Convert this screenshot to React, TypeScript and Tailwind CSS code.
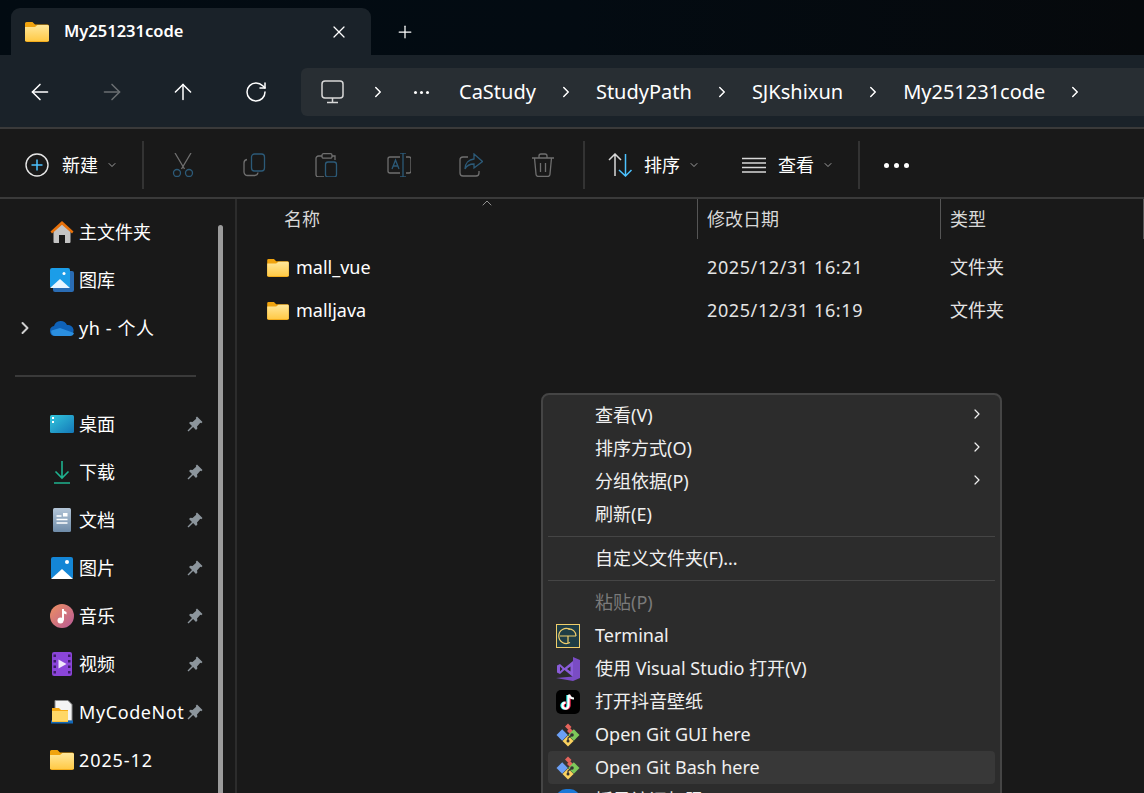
import { ArrowLeft, ArrowRight, ArrowUp, ChevronDown, ChevronRight, ChevronUp, Plus, RotateCw, X } from "lucide-react";
import type { ReactNode } from "react";

function FolderIcon({ className = "w-[24px] h-[20px]", id = "fold" }: { className?: string; id?: string }) {
  return (
    <svg className={className} viewBox="0 0 24 20">
      <defs>
        <linearGradient id={id} x1="0" y1="0" x2="0" y2="1">
          <stop offset="0" stopColor="#ffe79a" />
          <stop offset="1" stopColor="#ffc945" />
        </linearGradient>
      </defs>
      <path d="M0 1.500A1.500 1.500 0 0 1 1.500 0h6l2.500 2.500h12.500A1.500 1.500 0 0 1 24 4v14a2 2 0 0 1-2 2H2a2 2 0 0 1-2-2z" fill="#f0a30e" />
      <path d="M0 5h10l2.500-2h10A1.500 1.500 0 0 1 24 4.500V18.500a.8.8 0 0 1-.8.8H.8a.8.8 0 0 1-.8-.8z" fill={`url(#${id})`} />
    </svg>
  );
}

const HomeIcon = () => (
  <svg className="w-6 h-6" viewBox="0 0 24 24">
    <path d="M3.500 11 12 4l8.500 7v11a1 1 0 0 1-1 1H15v-8H9v8H4.500a1 1 0 0 1-1-1z" fill="#c4c4c4" />
    <path d="M0.500 11.500 12 1l11.500 10.500-1.500 2L12 4.800 2 13.500z" fill="#e8710a" />
  </svg>
);

const GalleryIcon = () => (
  <svg className="w-6 h-6" viewBox="0 0 24 24">
    <rect x="3" y="3" width="21" height="21" rx="2" fill="#2a6cb4" />
    <rect x="0" y="0" width="20" height="20" rx="2" fill="#1b9de8" />
    <path d="M0 20l10-9 10 9z" fill="#e8f5ff" />
    <circle cx="14" cy="5.500" r="1.500" fill="#fff" />
  </svg>
);

const CloudIcon = () => (
  <svg className="w-6 h-6" viewBox="0 0 24 24">
    <path d="M5 20a5 5 0 0 1-1-9.900A7 7 0 0 1 17 9a5.500 5.500 0 0 1 2 11z" fill="#0f62b8" />
    <path d="M5 20a4 4 0 0 1-3.500-5.500L10 12l14 5a4 4 0 0 1-4 3z" fill="#2b8fe0" />
  </svg>
);

const DesktopIcon = () => (
  <svg className="w-6 h-[19px]" viewBox="0 0 24 19">
    <defs>
      <linearGradient id="desk" x1="0" y1="0" x2="1" y2="1">
        <stop offset="0" stopColor="#33c6dc" />
        <stop offset="1" stopColor="#1478b8" />
      </linearGradient>
    </defs>
    <rect width="24" height="18" rx="1.500" fill="url(#desk)" />
    <rect x="2" y="2" width="2" height="2" fill="#fff" />
    <rect x="2" y="6" width="2" height="2" fill="#fff" />
  </svg>
);

const DownloadIcon = () => (
  <svg className="w-6 h-6" viewBox="0 0 24 24" fill="none" stroke="#1fb28f" strokeWidth="1.600">
    <path d="M12 1v17M5.500 11.500 12 18l6.500-6.500M4 23h16" />
  </svg>
);

const DocIcon = () => (
  <svg className="w-6 h-6" viewBox="0 0 24 24">
    <defs>
      <linearGradient id="doc" x1="0" y1="0" x2="0" y2="1">
        <stop offset="0" stopColor="#b4c6d8" />
        <stop offset="1" stopColor="#6e8ba8" />
      </linearGradient>
    </defs>
    <rect x="3" y="0" width="18" height="24" rx="1.500" fill="url(#doc)" />
    <path d="M6.500 8h5M6.500 11.500h11M6.500 15h11" stroke="#fff" strokeWidth="1.300" />
    <rect x="13" y="5" width="4.500" height="3.500" fill="#fff" />
  </svg>
);

const PictureIcon = () => (
  <svg className="w-6 h-6" viewBox="0 0 24 24">
    <rect x="1" y="1" width="22" height="22" rx="2" fill="#1486d6" />
    <path d="M1 23l11-10 11 10z" fill="#fff" />
    <circle cx="17" cy="6" r="2" fill="#fff" />
  </svg>
);

const MusicIcon = () => (
  <svg className="w-6 h-6" viewBox="0 0 24 24">
    <defs>
      <linearGradient id="mus" x1="0" y1="0" x2="1" y2="1">
        <stop offset="0" stopColor="#ee9060" />
        <stop offset="1" stopColor="#b75a98" />
      </linearGradient>
    </defs>
    <circle cx="12" cy="12" r="12" fill="url(#mus)" />
    <path d="M13 5v11.500" stroke="#fff" strokeWidth="2" />
    <path d="M12.500 5c1 2 3 2.500 4 3v2.500c-1.500-.5-3-1-4-2z" fill="#fff" />
    <circle cx="10.500" cy="16.500" r="3" fill="#fff" />
  </svg>
);

const VideoIcon = () => (
  <svg className="w-6 h-6" viewBox="0 0 24 24">
    <rect x="2" y="0" width="20" height="24" rx="2" fill="#8b45d9" />
    <rect x="3.500" y="2.500" width="2.500" height="2.500" fill="#3c1c68" />
    <rect x="3.500" y="8" width="2.500" height="2.500" fill="#3c1c68" />
    <rect x="3.500" y="13.500" width="2.500" height="2.500" fill="#3c1c68" />
    <rect x="3.500" y="19" width="2.500" height="2.500" fill="#3c1c68" />
    <rect x="18" y="2.500" width="2.500" height="2.500" fill="#3c1c68" />
    <rect x="18" y="8" width="2.500" height="2.500" fill="#3c1c68" />
    <rect x="18" y="13.500" width="2.500" height="2.500" fill="#3c1c68" />
    <rect x="18" y="19" width="2.500" height="2.500" fill="#3c1c68" />
    <path d="M8.500 7.500 16.500 12l-8 4.500z" fill="#efe6fb" />
  </svg>
);

const NoteFolderIcon = () => (
  <svg className="w-6 h-6" viewBox="0 0 24 24">
    <path d="M5 .5h13l4 4V21H5z" fill="#f4f4f4" stroke="#8a8a8a" />
    <rect x="1" y="20.500" width="22" height="3" fill="#1268b8" />
    <path d="M2 8h7l2 2h7v12H2z" fill="#f5a914" />
    <rect x="2" y="11" width="16" height="10.500" fill="#ffd767" />
  </svg>
);

const PinIcon = () => (
  <svg className="w-[16px] h-[16px]" viewBox="0 0 16 16" fill="#8c959c">
    <path d="M10 .5 15.500 6l-1.200 1.200-1-.4L10 10.500l.4 2.100-1.400 1.300-2.900-3L1.500 15.500 0.500 14.500 5 9.900l-3-2.900L3.400 5.700l2.100.4L9.200 2.700l-.4-1z" />
  </svg>
);

const GitIcon = () => (
  <svg className="w-6 h-6" viewBox="0 0 24 24">
    <path d="M9 3.500 12 .5 15.500 4l-3 3z" fill="#e5645c" />
    <path d="M13.500 8l3-3 3 3-3 3z" fill="#e5645c" transform="translate(-2.500 0)" />
    <path d="M6.200 6.300 11.800 12l-5.600 5.700L.5 12z" fill="#6ca0f5" />
    <path d="M17.800 6.300 23.500 12l-5.700 5.700L12.200 12z" fill="#7dc95a" />
    <path d="M12 12.400l5.600 5.600L12 23.500 6.500 18z" fill="#fbd25f" />
    <circle cx="16" cy="12" r="1.800" fill="#333" />
    <circle cx="12" cy="18" r="1.500" fill="#333" />
    <path d="M12 18v-3l4-3" stroke="#333" strokeWidth="1.200" fill="none" />
  </svg>
);

const TerminalIcon = () => (
  <svg className="w-6 h-6" viewBox="0 0 24 24" fill="none">
    <rect x=".5" y=".5" width="23" height="23" fill="#1f3d45" stroke="#f0cd6a" />
    <g stroke="#f0cd6a" strokeWidth="1.200">
      <path d="M14 5.500A7.500 7.500 0 1 0 14 18.500" />
      <path d="M12 12V19M4 12H20M12 5a7 7 0 0 1 8 7" />
    </g>
  </svg>
);

const VsIcon = () => (
  <svg className="w-6 h-6" viewBox="0 0 24 24">
    <path d="M17 0l7 3v18l-7 3-17-3 17-1.500z" fill="#7a4cc4" />
    <path d="M17 4v16L8.500 13 4 17l-3-1.500V8.500L4 7l4.500 4z" fill="#8a5cd8" />
    <path d="M4 9.500v5l2.500-2.500zM11 12l3.500 2.500v-5z" fill="#2c2c2c" />
  </svg>
);

const TikTokIcon = () => (
  <svg className="w-6 h-6" viewBox="0 0 24 24">
    <rect width="24" height="24" rx="5" fill="#000" />
    <path d="M12.500 4.500v10.500a3 3 0 1 1-3-3" fill="none" stroke="#25f4ee" strokeWidth="2.400" transform="translate(-1 .6)" />
    <path d="M12.500 4.500v10.500a3 3 0 1 1-3-3" fill="none" stroke="#fe2c55" strokeWidth="2.400" transform="translate(1 .6)" />
    <path d="M12.500 4.500v10.500a3 3 0 1 1-3-3" fill="none" stroke="#fff" strokeWidth="2.200" transform="translate(0 .6)" />
    <path d="M13 4.500c.5 2.500 2.500 4 5 4" fill="none" stroke="#fff" strokeWidth="2.200" />
  </svg>
);

const grey = "#6f6f6f";
const blue = "#2c5a78";

// disabled toolbar glyphs, drawn at the 24px windows icon grid
const CutIcon = () => (
  <svg className="w-6 h-6" viewBox="0 0 24 24" fill="none" strokeWidth="1.300">
    <path d="M4 0l9.500 16M20 0l-9.500 16" stroke={grey} />
    <circle cx="6" cy="20" r="3.500" stroke={blue} />
    <circle cx="18" cy="20" r="3.500" stroke={blue} />
  </svg>
);
const CopyIcon = () => (
  <svg className="w-6 h-6" viewBox="0 0 24 24" fill="none" strokeWidth="1.300">
    <path d="M4 6.500a3.500 3.500 0 0 0-3 3.500v9a3.500 3.500 0 0 0 3.500 3.500h7a3.500 3.500 0 0 0 3.500-3" stroke={grey} />
    <rect x="8.500" y="1" width="13" height="17" rx="3" stroke={blue} />
  </svg>
);
const PasteIcon = () => (
  <svg className="w-6 h-6" viewBox="0 0 24 24" fill="none" strokeWidth="1.300">
    <path d="M7 3H3.500A2.500 2.500 0 0 0 1 5.500v16A2.500 2.500 0 0 0 3.500 24H9M17 3h3v4" stroke={grey} />
    <rect x="7" y="0.700" width="10" height="4.500" rx="1.500" stroke={grey} />
    <rect x="10.500" y="9" width="11" height="15" rx="2.500" stroke={blue} />
  </svg>
);
const RenameIcon = () => (
  <svg className="w-6 h-6" viewBox="0 0 24 24" fill="none" strokeWidth="1.300">
    <path d="M13 4H3a2 2 0 0 0-2 2v12a2 2 0 0 0 2 2h10M19 4h3a2 2 0 0 1 2 2v12a2 2 0 0 1-2 2h-3" stroke={grey} />
    <path d="M13 0h6M16 0v24M13 24h6M5 16l3.500-9L12 16M6 13h5" stroke={blue} />
  </svg>
);
const ShareIcon = () => (
  <svg className="w-6 h-6" viewBox="0 0 24 24" fill="none" strokeWidth="1.300">
    <path d="M9 4H4a3 3 0 0 0-3 3v13a3 3 0 0 0 3 3h13a3 3 0 0 0 3-3v-2" stroke={grey} />
    <path d="M15 1l8.500 7.500L15 15v-4c-4 0-7 1-9 5 0-6 4-9.500 9-10z" stroke={blue} />
  </svg>
);
const TrashIcon = () => (
  <svg className="w-6 h-6" viewBox="0 0 24 24" fill="none" stroke={grey} strokeWidth="1.300">
    <path d="M1 5h22M8 5V3a2 2 0 0 1 2-2h4a2 2 0 0 1 2 2v2M3.500 5 5 21a2.500 2.500 0 0 0 2.500 2.500h9A2.500 2.500 0 0 0 19 21l1.500-16M9.500 10v9M14.500 10v9" />
  </svg>
);

function Crumb({ children }: { children: ReactNode }) {
  return (
    <>
      <span className="text-[20px] leading-none">{children}</span>
      <ChevronRight className="w-[18px] h-[18px] mx-[21px]" strokeWidth={2} />
    </>
  );
}

function SideItem({ icon, label, pin, chevron, tracking }: { icon: ReactNode; label: string; pin?: boolean; chevron?: boolean; tracking?: string }) {
  return (
    <div className="h-12 flex items-center pl-[50px] relative shrink-0">
      {chevron && <ChevronRight className="absolute left-[15px] w-5 h-5 text-[#d0d0d0]" strokeWidth={2.4} />}
      <span className="w-6 h-6 flex items-center justify-center shrink-0">{icon}</span>
      <span className={`ml-[5px] w-[108px] whitespace-nowrap ${tracking ?? ""}`}>{label}</span>
      {pin && <PinIcon />}
    </div>
  );
}

function MenuItem({ label, icon, arrow, dim, hot }: { label: string; icon?: ReactNode; arrow?: boolean; dim?: boolean; hot?: boolean }) {
  return (
    <div className={`h-[33px] flex items-center rounded-[4px] pl-[8px] pr-[10px] shrink-0 ${hot ? "bg-[#383838]" : ""} ${dim ? "text-[#7a7a7a]" : "text-[#f0f0f0]"}`}>
      <span className="w-6 h-6 shrink-0 mr-[15px]">{icon}</span>
      <span className="flex-1 whitespace-nowrap">{label}</span>
      {arrow && <ChevronRight className="w-4 h-4 text-[#f0f0f0] -mt-[3px]" strokeWidth={1.800} />}
    </div>
  );
}

const MenuRule = () => <div className="h-px bg-[#454545] my-[5px] shrink-0" />;

function ToolButton({ children, className = "" }: { children: ReactNode; className?: string }) {
  return <div className={`w-6 h-6 ${className}`}>{children}</div>;
}

export default function App() {
  return (
    <div className="relative w-[1144px] h-[793px] overflow-hidden bg-[#191919] text-white text-[18px] font-['Noto_Sans','Noto_Sans_CJK_SC',sans-serif] flex flex-col">
      {/* tab strip */}
      <div className="h-[55px] shrink-0 flex items-end bg-gradient-to-r from-[#020b12] via-[#030b12] to-[#06090c]">
        <div className="ml-[11px] w-[360px] h-[47px] bg-[#1a2229] rounded-t-[9px] flex items-center pl-[14px] pr-[22px]">
          <FolderIcon id="fold-tab" />
          <span className="ml-[15px] flex-1 font-semibold text-[16.500px]">My251231code</span>
          <X className="w-[20px] h-[20px]" strokeWidth={1.500} />
        </div>
        <div className="h-[47px] flex items-center ml-[24px]">
          <Plus className="w-[20px] h-[20px]" strokeWidth={1.500} />
        </div>
      </div>

      {/* nav + address */}
      <div className="h-[72px] shrink-0 pt-[2px] bg-[#1a2229] flex items-center">
        <div className="w-[301px] flex items-center shrink-0">
          <ArrowLeft className="ml-[27px] w-[26px] h-[26px]" strokeWidth={1.400} />
          <ArrowRight className="ml-[46px] w-[26px] h-[26px] text-[#6b6f72]" strokeWidth={1.400} />
          <ArrowUp className="ml-[45px] w-[26px] h-[26px]" strokeWidth={1.400} />
          <RotateCw className="ml-[48px] w-[24px] h-[24px]" strokeWidth={1.500} />
        </div>
        <div className="flex-1 h-[48px] bg-[#282e33] rounded-l-[6px] flex items-center pl-[20px] overflow-hidden">
          <svg className="w-6 h-6 shrink-0" viewBox="0 0 24 24" fill="none" stroke="#d8d8d8" strokeWidth="1.500">
            <rect x="1" y="1" width="21" height="17" rx="3" />
            <path d="M11.500 18v4M6 22.500h11" />
          </svg>
          <ChevronRight className="w-[18px] h-[18px] ml-[24px]" strokeWidth={2} />
          <span className="ml-[27px] flex gap-[3px]">
            <i className="w-[3px] h-[3px] bg-white rounded-full" />
            <i className="w-[3px] h-[3px] bg-white rounded-full" />
            <i className="w-[3px] h-[3px] bg-white rounded-full" />
          </span>
          <span className="ml-[30px] flex items-center">
            <Crumb>CaStudy</Crumb>
            <Crumb>StudyPath</Crumb>
            <Crumb>SJKshixun</Crumb>
            <Crumb>My251231code</Crumb>
          </span>
        </div>
      </div>

      {/* command bar */}
      <div className="h-[72px] shrink-0 pt-[4px] bg-[#191919] border-y-2 border-[#3a3a3a] flex items-center">
        <svg className="ml-[25px] w-6 h-6" viewBox="0 0 24 24" fill="none">
          <circle cx="12" cy="12" r="11" stroke="#e6e6e6" strokeWidth="1.400" />
          <path d="M12 6.500v11M6.500 12h11" stroke="#4cc2ff" strokeWidth="1.500" />
        </svg>
        <span className="ml-[13px]">新建</span>
        <ChevronDown className="ml-[8px] w-[12px] h-[12px] text-[#c8c8c8]" strokeWidth={1.500} />
        <div className="ml-[24px] w-[2px] h-[48px] bg-[#333]" />
        <ToolButton className="ml-[27px]"><CutIcon /></ToolButton>
        <ToolButton className="ml-[48px]"><CopyIcon /></ToolButton>
        <ToolButton className="ml-[48px]"><PasteIcon /></ToolButton>
        <ToolButton className="ml-[48px]"><RenameIcon /></ToolButton>
        <ToolButton className="ml-[48px]"><ShareIcon /></ToolButton>
        <ToolButton className="ml-[48px]"><TrashIcon /></ToolButton>
        <div className="ml-[28px] w-[2px] h-[48px] bg-[#333]" />
        <svg className="ml-[23px] w-6 h-6" viewBox="0 0 24 24" fill="none" strokeWidth="1.500">
          <path d="M1 7l6-6 6 6M7 1v22" stroke="#d8d8d8" />
          <path d="M11 17l6.500 6 6-6M17.500 1v22" stroke="#4cc2ff" />
        </svg>
        <span className="ml-[12px]">排序</span>
        <ChevronDown className="ml-[8px] w-[12px] h-[12px] text-[#c8c8c8]" strokeWidth={1.500} />
        <svg className="ml-[42px] w-6 h-6" viewBox="0 0 24 24" fill="none" stroke="#d8d8d8" strokeWidth="1.400">
          <path d="M0 5.500h24M0 10h24M0 14.500h24M0 19h24" />
        </svg>
        <span className="ml-[12px]">查看</span>
        <ChevronDown className="ml-[8px] w-[12px] h-[12px] text-[#c8c8c8]" strokeWidth={1.500} />
        <div className="ml-[24px] w-[2px] h-[48px] bg-[#333]" />
        <span className="ml-[24px] flex gap-[5px]">
          <i className="w-[5px] h-[5px] bg-white rounded-full" />
          <i className="w-[5px] h-[5px] bg-white rounded-full" />
          <i className="w-[5px] h-[5px] bg-white rounded-full" />
        </span>
      </div>

      {/* body */}
      <div className="flex-1 flex min-h-0">
        <aside className="w-[237px] shrink-0 border-r-2 border-[#2c2c2c] relative pt-[9px] overflow-hidden">
          <SideItem icon={<HomeIcon />} label="主文件夹" />
          <SideItem icon={<GalleryIcon />} label="图库" />
          <SideItem icon={<CloudIcon />} label="yh - 个人" chevron tracking="tracking-[0.6px]" />
          <div className="h-12 flex items-center pl-[15px] pr-[39px]"><div className="h-[2px] w-full bg-[#3a3a3a]" /></div>
          <SideItem icon={<DesktopIcon />} label="桌面" pin />
          <SideItem icon={<DownloadIcon />} label="下载" pin />
          <SideItem icon={<DocIcon />} label="文档" pin />
          <SideItem icon={<PictureIcon />} label="图片" pin />
          <SideItem icon={<MusicIcon />} label="音乐" pin />
          <SideItem icon={<VideoIcon />} label="视频" pin />
          <SideItem icon={<NoteFolderIcon />} label="MyCodeNot" pin tracking="tracking-[0.6px]" />
          <SideItem icon={<FolderIcon className="w-6 h-[20px]" id="fold-side" />} label="2025-12" tracking="tracking-[0.9px]" />
          <div className="absolute left-[218px] top-[26px] bottom-0 w-[5px] bg-[#9b9b9b] rounded-t-full" />
        </aside>

        <main className="flex-1 min-w-0">
          <div className="h-[40px] relative flex items-center text-[#d8d8d8]">
            <span className="w-[460px] pl-[47px]">名称</span>
            <span className="w-[243px] pl-[9px] h-full flex items-center border-l border-[#555]">修改日期</span>
            <span className="flex-1 pl-[9px] h-full flex items-center border-l border-r border-[#555]">类型</span>
            <ChevronUp className="absolute left-[242px] top-[-4px] w-4 h-4 text-[#b0b0b0]" strokeWidth={1.200} />
          </div>
          <div className="flex flex-col pt-[7px]">
            {[
              ["mall_vue", "2025/12/31 16:21"],
              ["malljava", "2025/12/31 16:19"],
            ].map(([name, date], i) => (
              <div key={name} className="h-[43px] flex items-center">
                <span className="w-[460px] pl-[30px] flex items-center whitespace-nowrap">
                  <FolderIcon className="w-[22px] h-[18px]" id={`fold-row-${i}`} />
                  <span className="ml-[7px]">{name}</span>
                </span>
                <span className="w-[243px] pl-[10px] text-[#e4e4e4] tracking-[0.6px]">{date}</span>
                <span className="pl-[10px] text-[#e4e4e4]">文件夹</span>
              </div>
            ))}
          </div>
        </main>
      </div>

      {/* context menu, runs past the bottom of the shot */}
      <div className="absolute left-[541px] top-[393px] w-[461px] h-[440px] bg-[#2c2c2c] border-2 border-[#454545] rounded-[8px] px-[5px] pt-[4px] flex flex-col">
        <MenuItem label="查看(V)" arrow />
        <MenuItem label="排序方式(O)" arrow />
        <MenuItem label="分组依据(P)" arrow />
        <MenuItem label="刷新(E)" />
        <MenuRule />
        <MenuItem label="自定义文件夹(F)..." />
        <MenuRule />
        <MenuItem label="粘贴(P)" dim />
        <MenuItem label="Terminal" icon={<TerminalIcon />} />
        <MenuItem label="使用 Visual Studio 打开(V)" icon={<VsIcon />} />
        <MenuItem label="打开抖音壁纸" icon={<TikTokIcon />} />
        <MenuItem label="Open Git GUI here" icon={<GitIcon />} />
        <MenuItem label="Open Git Bash here" icon={<GitIcon />} hot />
        <MenuItem label="授予访问权限(G)" icon={<div className="w-6 h-6 bg-[#1b78d8] rounded-t-[10px]" />} />
      </div>
    </div>
  );
}
